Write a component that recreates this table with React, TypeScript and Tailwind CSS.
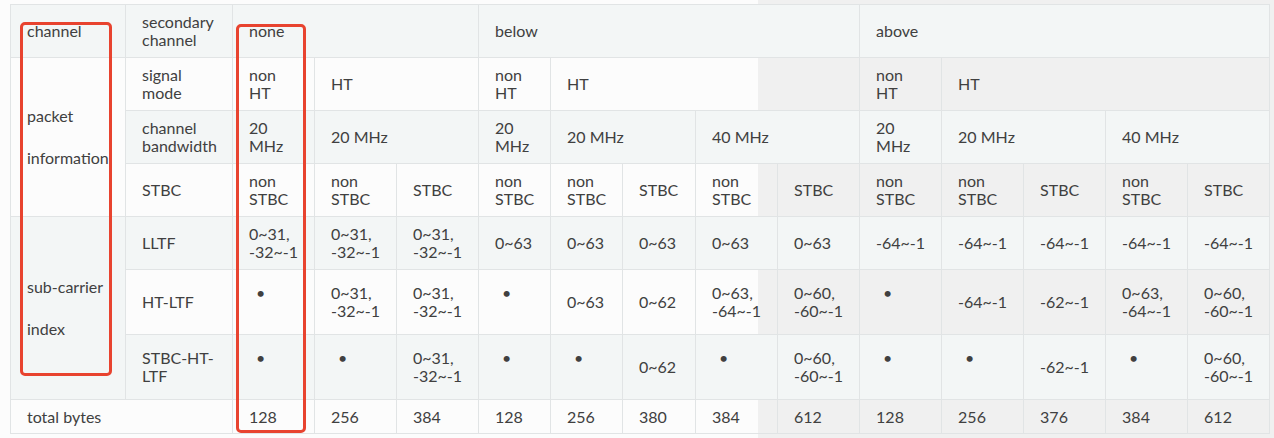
import React from "react";

const cell = "border border-[#e1e4e5] pl-4 pr-2 align-middle text-left font-normal";

function Dot() {
  return (
    <>
      <span className="pl-[7px]">•</span>
      <br />
      <span>&nbsp;</span>
    </>
  );
}

function Two({ a, b }: { a: string; b: string }) {
  return (
    <>
      {a}
      <br />
      {b}
    </>
  );
}

function C({
  children,
  cs,
  rs,
}: {
  children?: React.ReactNode;
  cs?: number;
  rs?: number;
}) {
  return (
    <td className={cell} colSpan={cs} rowSpan={rs}>
      {children}
    </td>
  );
}

export default function App() {
  const widths = [115, 107, 82, 82, 82, 72, 72, 73, 82, 82, 82, 82, 82, 82, 82];
  const stripe = "bg-[#f3f6f6]";
  return (
    <div className="relative w-[1274px] h-[438px] overflow-hidden bg-[linear-gradient(to_right,#fcfcfc_758px,#f0f0f0_758px)] pt-[4px] pl-[10px] font-['Lato','Noto_Sans',sans-serif] text-[16px] leading-[17.6px] text-[#404040]">
      <table className="table-fixed border-collapse border border-[#e1e4e5] w-[1259px]">
        <colgroup>
          {widths.map((w, i) => (
            <col key={i} style={{ width: w }} />
          ))}
        </colgroup>
        <tbody>
          <tr className={`${stripe} h-[53px]`}>
            <C>channel</C>
            <C>
              <Two a="secondary" b="channel" />
            </C>
            <C cs={3}>none</C>
            <C cs={5}>below</C>
            <C cs={5}>above</C>
          </tr>
          <tr className="h-[53px]">
            <C rs={3}>
              <p className="mb-6">packet</p>
              <p>information</p>
            </C>
            <C>
              <Two a="signal" b="mode" />
            </C>
            <C>
              <Two a="non" b="HT" />
            </C>
            <C cs={2}>HT</C>
            <C>
              <Two a="non" b="HT" />
            </C>
            <C cs={4}>HT</C>
            <C>
              <Two a="non" b="HT" />
            </C>
            <C cs={4}>HT</C>
          </tr>
          <tr className={`${stripe} h-[53px]`}>
            <C>
              <Two a="channel" b="bandwidth" />
            </C>
            <C>
              <Two a="20" b="MHz" />
            </C>
            <C cs={2}>20 MHz</C>
            <C>
              <Two a="20" b="MHz" />
            </C>
            <C cs={2}>20 MHz</C>
            <C cs={2}>40 MHz</C>
            <C>
              <Two a="20" b="MHz" />
            </C>
            <C cs={2}>20 MHz</C>
            <C cs={2}>40 MHz</C>
          </tr>
          <tr className="h-[53px]">
            <C>STBC</C>
            <C>
              <Two a="non" b="STBC" />
            </C>
            <C>
              <Two a="non" b="STBC" />
            </C>
            <C>STBC</C>
            <C>
              <Two a="non" b="STBC" />
            </C>
            <C>
              <Two a="non" b="STBC" />
            </C>
            <C>STBC</C>
            <C>
              <Two a="non" b="STBC" />
            </C>
            <C>STBC</C>
            <C>
              <Two a="non" b="STBC" />
            </C>
            <C>
              <Two a="non" b="STBC" />
            </C>
            <C>STBC</C>
            <C>
              <Two a="non" b="STBC" />
            </C>
            <C>STBC</C>
          </tr>
          <tr className={`${stripe} h-[53px]`}>
            <C rs={3}>
              <p className="mb-6">sub-carrier</p>
              <p>index</p>
            </C>
            <C>LLTF</C>
            <C>
              <Two a="0~31," b="-32~-1" />
            </C>
            <C>
              <Two a="0~31," b="-32~-1" />
            </C>
            <C>
              <Two a="0~31," b="-32~-1" />
            </C>
            <C>0~63</C>
            <C>0~63</C>
            <C>0~63</C>
            <C>0~63</C>
            <C>0~63</C>
            <C>-64~-1</C>
            <C>-64~-1</C>
            <C>-64~-1</C>
            <C>-64~-1</C>
            <C>-64~-1</C>
          </tr>
          <tr className="h-[65px]">
            <C>HT-LTF</C>
            <C>
              <Dot />
            </C>
            <C>
              <Two a="0~31," b="-32~-1" />
            </C>
            <C>
              <Two a="0~31," b="-32~-1" />
            </C>
            <C>
              <Dot />
            </C>
            <C>0~63</C>
            <C>0~62</C>
            <C>
              <Two a="0~63," b="-64~-1" />
            </C>
            <C>
              <Two a="0~60," b="-60~-1" />
            </C>
            <C>
              <Dot />
            </C>
            <C>-64~-1</C>
            <C>-62~-1</C>
            <C>
              <Two a="0~63," b="-64~-1" />
            </C>
            <C>
              <Two a="0~60," b="-60~-1" />
            </C>
          </tr>
          <tr className={`${stripe} h-[65px]`}>
            <C>
              <Two a="STBC-HT-" b="LTF" />
            </C>
            <C>
              <Dot />
            </C>
            <C>
              <Dot />
            </C>
            <C>
              <Two a="0~31," b="-32~-1" />
            </C>
            <C>
              <Dot />
            </C>
            <C>
              <Dot />
            </C>
            <C>0~62</C>
            <C>
              <Dot />
            </C>
            <C>
              <Two a="0~60," b="-60~-1" />
            </C>
            <C>
              <Dot />
            </C>
            <C>
              <Dot />
            </C>
            <C>-62~-1</C>
            <C>
              <Dot />
            </C>
            <C>
              <Two a="0~60," b="-60~-1" />
            </C>
          </tr>
          <tr className="h-[34px]">
            <C cs={2}>total bytes</C>
            <C>128</C>
            <C>256</C>
            <C>384</C>
            <C>128</C>
            <C>256</C>
            <C>380</C>
            <C>384</C>
            <C>612</C>
            <C>128</C>
            <C>256</C>
            <C>376</C>
            <C>384</C>
            <C>612</C>
          </tr>
        </tbody>
      </table>
      <div className="absolute left-[20px] top-[22px] w-[92px] h-[354px] border-[3px] border-[#e8432f] rounded-[5px]" />
      <div className="absolute left-[236px] top-[24px] w-[70px] h-[409px] border-[3px] border-[#e8432f] rounded-[5px]" />
    </div>
  );
}
